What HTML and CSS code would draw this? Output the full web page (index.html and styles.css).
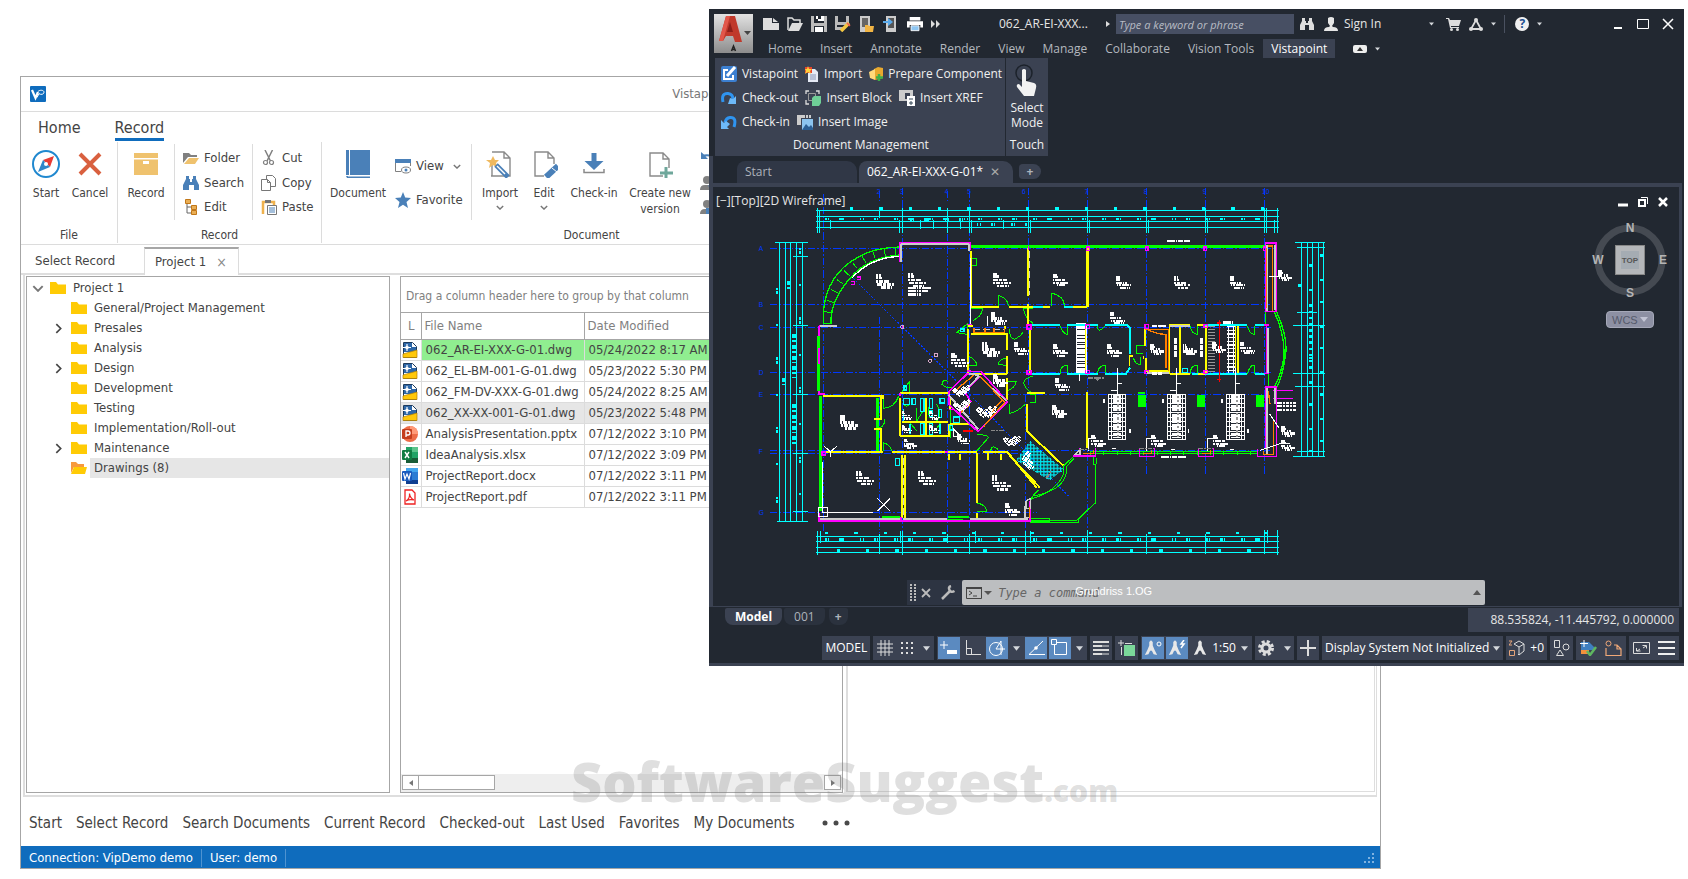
FILE: index.html
```
<!DOCTYPE html>
<html lang="en">
<head>
<meta charset="utf-8">
<title>Vistapoint</title>
<link rel="stylesheet" href="styles.css">
</head>
<body>
<svg class="defs" aria-hidden="true">
  <defs>
    <symbol id="folder" viewBox="0 0 16 12"><path fill="#ffcb05" d="M0 0h6l2 2.500h8V12H0z"/></symbol>
    <symbol id="chev" viewBox="0 0 10 6"><path d="M1 1l4 4 4-4" fill="none" stroke="#777" stroke-width="1.700"/></symbol>
    <symbol id="exp" viewBox="0 0 10 10"><path d="M3 1l4 4-4 4" fill="none" stroke="#444" stroke-width="1.500"/></symbol>
    <symbol id="tri" viewBox="0 0 8 5"><path d="M0 0h8L4 5z" fill="#d5d8dc"/></symbol>
    <symbol id="dwg" viewBox="0 0 16 16"><path fill="#fff" stroke="#1d3a5c" d="M1.500.5h9l4 4v11h-13z"/><path fill="#2f68a8" d="M2 1h8v4h4v5H2z"/><path fill="#ffc80a" d="M1 15.500V12L15 8v7.500z" stroke="#b78300" stroke-width=".7"/><path d="M5 2v7M1 5.500h8" stroke="#fff" stroke-width="1.200"/><circle cx="5" cy="5.500" r="1.800" fill="#fff"/></symbol>
    <symbol id="A" viewBox="0 0 16 18"><path fill="#e8e8e8" d="M8 0l2 2v4l2 5 3 6-4-1-2-4H7l-2 4-4 1 3-6 2-5V2z"/></symbol>
    <symbol id="lb" viewBox="0 0 70 46" overflow="visible"><path d="M0 3h14M0 11h18" stroke-dasharray="7 1" stroke-width="8"/><path d="M0 21h42M2 30h52M14 39h34" stroke-dasharray="6 2 9 1 3 2" stroke-width="8"/></symbol>
    <symbol id="rack" viewBox="0 0 54 140" overflow="visible"><path fill="none" d="M1 1h52v136H1zM10 1v136M44 1v136M1 14h52M1 28h52M1 42h52M1 56h52M1 70h52M1 84h52M1 98h52M1 112h52M1 126h52"/><path d="M27 4v130" stroke-width="26" stroke-dasharray="9 3 5 2"/><path d="M31 6v128" stroke-width="6" stroke="#999" stroke-dasharray="7 6"/></symbol>
    <pattern id="hatch" width="10" height="10" patternUnits="userSpaceOnUse"><path d="M0 0h10M0 0v10" stroke="#00e5ee" stroke-width="7"/></pattern>
  </defs>
</svg>

<main class="desktop">
<section class="vp" aria-label="Vistapoint">
  <header class="vp-title">
    <svg width="16" height="16" viewBox="0 0 16 16"><rect width="16" height="16" rx="1" fill="#0f6cbd"/><path d="M2 4l3.500 8L8 6" fill="none" stroke="#fff" stroke-width="2.200"/><path d="M8 5.500c2-2 6-1.500 6 .7s-3 2.800-5 1.500L7 11.500" fill="none" stroke="#fff"/></svg>
    <h1>Vistapoint</h1>
  </header>
  <nav class="vp-tabs"><button>Home</button><button class="on">Record</button></nav>
  <div class="ribbon">
    <div class="rg file">
      <div class="rb">
        <button class="big w44"><svg width="28" height="28" viewBox="0 0 28 28"><circle cx="14" cy="14" r="13" fill="#fff" stroke="#2088cf" stroke-width="2"/><path fill="#e83c34" d="M22 6l-4 11-7-7z"/><path fill="#2f86c9" d="M6 22l5-12 7 7z"/><circle cx="14" cy="14" r="2" fill="#fff"/></svg><span>Start</span></button>
        <button class="big w44"><svg width="28" height="28" viewBox="0 0 28 28"><path d="M4 4l20 20M24 4L4 24" stroke="#d9603f" stroke-width="4"/></svg><span>Cancel</span></button>
      </div>
      <p>File</p>
    </div>
    <div class="rg record">
      <div class="rb">
        <button class="big w56"><svg width="28" height="28" viewBox="0 0 28 28"><path fill="#efc26e" d="M2 3h24v5H2zM2 9.500h24V25H2z"/><path fill="#fff" d="M11 11h6v3h-6z"/></svg><span>Record</span></button>
        <div class="small w78">
          <button><svg width="16" height="16" viewBox="0 0 16 16"><path fill="#808080" d="M0 3h6l2 2h6v2H5L0 13z"/><path fill="#efc26e" d="M1 14l5-6h10l-4 6z"/></svg>Folder</button>
          <button><svg width="16" height="16" viewBox="0 0 16 16"><path fill="#4a80b8" d="M3 1h3v3h1v3h2V4h1V1h3v3l3 6v5h-5v-5H6v5H0v-5l3-6z"/></svg>Search</button>
          <button><svg width="16" height="16" viewBox="0 0 16 16"><path d="M4 5v9h4M4 8h4" fill="none" stroke="#666"/><path fill="#e9ae55" stroke="#c17718" d="M2.500.5h5v4h-5zM8.500 6.500h5v4h-5zM8.500 11.500h5v4h-5z"/></svg>Edit</button>
        </div>
        <div class="small">
          <button><svg width="16" height="16" viewBox="0 0 16 16"><path d="M4 0l5.500 11M11.500 0L6 11" stroke="#808080" stroke-width="1.500"/><circle cx="4.500" cy="12.500" r="2" fill="none" stroke="#808080" stroke-width="1.200"/><circle cx="10.500" cy="12.500" r="2" fill="none" stroke="#808080" stroke-width="1.200"/></svg>Cut</button>
          <button><svg width="16" height="16" viewBox="0 0 16 16"><path fill="#fff" stroke="#777" d="M5.500.5h6l3 3v8h-9z"/><path fill="#fff" stroke="#777" d="M.5 4.500h6l3 3v8h-9zM6.500 4.500v3h3"/></svg>Copy</button>
          <button><svg width="16" height="16" viewBox="0 0 16 16"><path d="M2 15V3h11v3" fill="none" stroke="#efb24e" stroke-width="2.500"/><path fill="#777" d="M4 1h6v3H4z"/><path fill="#fff" stroke="#777" d="M6.500 6.500h9v9h-9z"/><path d="M8 9h6M8 11h6M8 13h6" stroke="#4a80b8"/></svg>Paste</button>
        </div>
      </div>
      <p>Record</p>
    </div>
    <div class="rg doc">
      <div class="rb">
        <button class="big w72"><svg width="28" height="28" viewBox="0 0 28 28"><path fill="#4a80b8" d="M2 0h3v25H2zM6 0h20v25H6zM2 26h24v2H3z"/><path fill="#fff" d="M4 25.500h22v1H4z"/></svg><span>Document</span></button>
        <div class="small two">
          <button><svg width="16" height="16" viewBox="0 0 16 16"><path fill="#4a80b8" d="M0 1h16v4H0z"/><path d="M.5 5v8.500H6M15.500 5v3" stroke="#808080" fill="none"/><ellipse cx="11" cy="12" rx="4.500" ry="3" fill="#fff" stroke="#808080"/><circle cx="11" cy="12" r="1.500" fill="#4a80b8"/></svg>View<svg class="ch" width="8" height="5"><use href="#chev"/></svg></button>
          <button><svg width="16" height="16" viewBox="0 0 16 16"><path fill="#4a80b8" d="M8 0l2.200 5.500L16 6l-4.500 4 1.500 6-5-3.300L3 16l1.500-6L0 6l5.800-.5z"/></svg>Favorite</button>
        </div>
        <button class="big w44"><svg width="28" height="28" viewBox="0 0 28 28"><path d="M6 2h12l6 6v18H5M18 2v6h6M6 14v12" fill="none" stroke="#8a8a8a" stroke-width="1.400"/><path fill="#efb95f" d="M7 6l2 4 4 0-3 3 2 5-5-3-4 3 1-5-4-3 5 0z"/><path d="M10 15l12 12" stroke="#4a80b8" stroke-width="5"/><path d="M11 16l8 8" stroke="#fff" stroke-width="1.500"/></svg><span>Import</span><svg class="ch" width="8" height="5"><use href="#chev"/></svg></button>
        <button class="big w44"><svg width="28" height="28" viewBox="0 0 28 28"><path d="M14 26H5V2h13l6 6v6M18 2v6h6" fill="none" stroke="#8a8a8a" stroke-width="1.400"/><path d="M16 27l12-11" stroke="#4a80b8" stroke-width="6"/><path d="M22 18l5 4" stroke="#fff"/></svg><span>Edit</span><svg class="ch" width="8" height="5"><use href="#chev"/></svg></button>
        <button class="big w56"><svg width="28" height="28" viewBox="0 0 28 28"><path fill="#4a80b8" d="M11.500 3h5v8h7L14 20l-9.500-9h7z"/><path d="M4 19v3.500h20V19" fill="none" stroke="#8a8a8a" stroke-width="1.500"/></svg><span>Check-in</span></button>
        <button class="big w76"><svg width="28" height="28" viewBox="0 0 28 28"><path d="M17 26H4V3h13l6 6v9M17 3v6h6" fill="none" stroke="#8a8a8a" stroke-width="1.400"/><path d="M20 17v12M14 23h13" stroke="#6fa79b" stroke-width="3"/></svg><span>Create new<br>version</span></button>
        <div class="small">
          <button aria-label="Undo"><svg width="16" height="16" viewBox="0 0 16 16"><path fill="#4a80b8" d="M1 2v7h7L5.500 6.500Q10 5 13 10 13 3 4 4.500z"/></svg></button>
          <button aria-label="Assign user"><svg width="16" height="16" viewBox="0 0 16 16"><circle cx="7" cy="5" r="4" fill="#808080"/><path fill="#808080" d="M0 15q0-5 5-5h4q4 0 4 5z"/><path fill="#4a80b8" d="M8 11l4-3v6z"/></svg></button>
          <button aria-label="Save user"><svg width="16" height="16" viewBox="0 0 16 16"><circle cx="7" cy="5" r="4" fill="#808080"/><path fill="#808080" d="M0 15q0-5 5-5h4q4 0 4 5z"/><path fill="#4a80b8" d="M6 9h9v6H6z"/></svg></button>
        </div>
      </div>
      <p>Document</p>
    </div>
  </div>
  <div class="doctabs"><button>Select Record</button><button class="on">Project 1 <span>×</span></button></div>
  <div class="work">
    <div class="tree panel">
      <ul>
        <li class="root"><button aria-label="Collapse"><svg width="12" height="7"><use href="#chev"/></svg></button><svg width="16" height="12"><use href="#folder"/></svg><span>Project 1</span></li>
        <li><i></i><svg width="16" height="12"><use href="#folder"/></svg><span>General/Project Management</span></li>
        <li><button aria-label="Expand"><svg width="11" height="11"><use href="#exp"/></svg></button><svg width="16" height="12"><use href="#folder"/></svg><span>Presales</span></li>
        <li><i></i><svg width="16" height="12"><use href="#folder"/></svg><span>Analysis</span></li>
        <li><button aria-label="Expand"><svg width="11" height="11"><use href="#exp"/></svg></button><svg width="16" height="12"><use href="#folder"/></svg><span>Design</span></li>
        <li><i></i><svg width="16" height="12"><use href="#folder"/></svg><span>Development</span></li>
        <li><i></i><svg width="16" height="12"><use href="#folder"/></svg><span>Testing</span></li>
        <li><i></i><svg width="16" height="12"><use href="#folder"/></svg><span>Implementation/Roll-out</span></li>
        <li><button aria-label="Expand"><svg width="11" height="11"><use href="#exp"/></svg></button><svg width="16" height="12"><use href="#folder"/></svg><span>Maintenance</span></li>
        <li class="sel"><i></i><svg width="16" height="12" viewBox="0 0 16 12"><path fill="#f79a3e" d="M0 0h5l2 2h6v3H3L0 11z"/><path fill="#ffcb05" d="M0 12l3-7h13l-2 7z"/></svg><span>Drawings (8)</span></li>
      </ul>
    </div>
    <div class="grid panel">
      <p class="hint">Drag a column header here to group by that column</p>
      <table>
        <thead><tr><th class="c1">L</th><th class="c2">File Name</th><th>Date Modified</th></tr></thead>
        <tbody>
          <tr class="green"><td class="ic"><svg width="16" height="16"><use href="#dwg"/></svg></td><td>062_AR-EI-XXX-G-01.dwg</td><td>05/24/2022 8:17 AM</td></tr>
          <tr><td class="ic"><svg width="16" height="16"><use href="#dwg"/></svg></td><td>062_EL-BM-001-G-01.dwg</td><td>05/23/2022 5:30 PM</td></tr>
          <tr><td class="ic"><svg width="16" height="16"><use href="#dwg"/></svg></td><td>062_FM-DV-XXX-G-01.dwg</td><td>05/24/2022 8:25 AM</td></tr>
          <tr class="grey"><td class="ic"><svg width="16" height="16"><use href="#dwg"/></svg></td><td>062_XX-XX-001-G-01.dwg</td><td>05/23/2022 5:48 PM</td></tr>
          <tr><td class="ic"><svg width="16" height="16" viewBox="0 0 16 16"><circle cx="8" cy="8" r="8" fill="#ed6c47"/><path fill="#ff9a78" d="M8 0a8 8 0 018 8H8z"/><rect y="3" width="10" height="10" rx="1" fill="#c43e1c"/><path d="M4 11V5h2q2 0 2 2T6 9H4" fill="none" stroke="#fff" stroke-width="1.300"/></svg></td><td>AnalysisPresentation.pptx</td><td>07/12/2022 3:10 PM</td></tr>
          <tr><td class="ic"><svg width="16" height="16" viewBox="0 0 16 16"><path fill="#21a366" d="M4 0h12v16H4z"/><path fill="#5bc48b" d="M10 0h6v5h-6z"/><path fill="#185c37" d="M4 11h12v5H4z"/><rect y="3" width="10" height="10" rx="1" fill="#107c41"/><path d="M3 5l4 6M7 5l-4 6" stroke="#fff" stroke-width="1.400"/></svg></td><td>IdeaAnalysis.xlsx</td><td>07/12/2022 3:09 PM</td></tr>
          <tr><td class="ic"><svg width="16" height="16" viewBox="0 0 16 16"><path fill="#2b7cd3" d="M4 0h12v16H4z"/><path fill="#41a5ee" d="M4 0h12v4H4z"/><path fill="#103f91" d="M4 12h12v4H4z"/><rect y="3" width="10" height="10" rx="1" fill="#185abd"/><path d="M1.500 5l1.500 6 2-5 2 5 1.500-6" fill="none" stroke="#fff" stroke-width="1.200"/></svg></td><td>ProjectReport.docx</td><td>07/12/2022 3:11 PM</td></tr>
          <tr><td class="ic"><svg width="16" height="16" viewBox="0 0 16 16"><path fill="#fff" stroke="#e22" stroke-width="1.300" d="M3 1h7l3 3v11H3z"/><path d="M4 12q4-2 3.500-7.500Q8 9 12 11q-5-1-8 1z" fill="none" stroke="#e22" stroke-width="1.200"/></svg></td><td>ProjectReport.pdf</td><td>07/12/2022 3:11 PM</td></tr>
        </tbody>
      </table>
      <div class="hscroll"><button aria-label="Scroll left"><svg width="4" height="6"><path d="M4 0v6L0 3z" fill="#777"/></svg></button><span></span><button class="r" aria-label="Scroll right"><svg width="4" height="6"><path d="M0 0v6l4-3z" fill="#777"/></svg></button></div>
    </div>
    <div class="detail"></div>
  </div>
  <nav class="bottom"><a href="#">Start</a><a href="#">Select Record</a><a href="#">Search Documents</a><a href="#">Current Record</a><a href="#">Checked-out</a><a href="#">Last Used</a><a href="#">Favorites</a><a href="#">My Documents</a><button aria-label="More"><svg width="28" height="6" viewBox="0 0 28 6"><g fill="#4a4a4a"><circle cx="3" cy="3" r="2.500"/><circle cx="14" cy="3" r="2.500"/><circle cx="25" cy="3" r="2.500"/></g></svg></button></nav>
  <footer class="vp-status"><span>Connection: VipDemo demo</span><span>User: demo</span><svg width="12" height="12" viewBox="0 0 12 12"><path d="M9 1v2M9 5v2M9 9v2M5 5v2M5 9v2M1 9v2" stroke="#7fb2e0" stroke-width="2"/></svg></footer>
</section>
<div class="mark">SoftwareSuggest<small>.com</small></div>

<section class="cad" aria-label="AutoCAD">
  <header class="cad-head">
    <button class="app" aria-label="Application menu"><svg width="39" height="39" viewBox="0 0 39 39"><path fill="#c0392b" d="M12 2h9l7 26h-7l-2-6h-7l-3 5H5z"/><path fill="#8e1f1a" d="M16 8l3 10h-6z"/><path fill="#e2574a" d="M12 2h4L9 27H5z"/><path fill="#444" d="M30 17h7l-3.500 4z"/><path d="M17.500 37l2-5 2 5M18 35.500h3" fill="none" stroke="#222" stroke-width="1.500"/></svg></button>
    <div class="cad-bars">
      <div class="cad-title">
        <div class="qat">
          <button aria-label="New"><svg width="16" height="16" viewBox="0 0 16 16"><path fill="#ddd" d="M0 2h9v5h7v7H0z"/><path fill="#ddd" d="M10 2l5 4h-5z"/></svg></button>
          <button aria-label="Open"><svg width="16" height="16" viewBox="0 0 16 16"><path d="M1 14V2h4l2 2h6v3" fill="none" stroke="#ddd" stroke-width="1.500"/><path fill="#ddd" d="M1 15l4-8h11l-4 8z"/></svg></button>
          <button aria-label="Save"><svg width="16" height="16" viewBox="0 0 16 16"><path fill="#bbb" d="M0 0h16v16H0z"/><path fill="#222831" d="M3 0h10v7H3zM3 10h10v6H3z"/><path fill="#fff" d="M5 0h2v5h6V0h-3v3H5zM4 11h8v5H4z"/></svg></button>
          <button aria-label="Save as"><svg width="16" height="16" viewBox="0 0 16 16"><path fill="#bbb" d="M0 0h14v8L8 14H0z"/><path fill="#222831" d="M3 0h8v6H3zM2 9h8v2H2z"/><path d="M6 15l8-8" stroke="#f5c842" stroke-width="3.500"/><path d="M12 7l3 3" stroke="#e55" stroke-width="1.500"/></svg></button>
          <button aria-label="Open from mobile"><svg width="16" height="16" viewBox="0 0 16 16"><path fill="#ccc" d="M1 0h10v16H1z"/><path fill="#666" d="M3 2h6v9H3z"/><path fill="#f2b544" d="M6 9h3l1 1h5l-1 6H6z"/></svg></button>
          <button aria-label="Save to mobile"><svg width="16" height="16" viewBox="0 0 16 16"><path fill="#ccc" d="M3 0h10v16H3z"/><path fill="#555" d="M5 2h6v10H5z"/><path fill="#5aa9ea" d="M0 5h5V2l5 4-5 4V7H0z"/></svg></button>
          <button aria-label="Plot"><svg width="16" height="16" viewBox="0 0 18 16"><path fill="#fff" d="M3 0h12v4H3zM0 5h18v7h-3V9H3v3H0z"/><path fill="#8ec6f2" stroke="#fff" d="M4.500 10h9v5.500h-9z"/></svg></button>
          <button aria-label="More"><svg width="10" height="8" viewBox="0 0 10 8"><path fill="#ddd" d="M0 0l4 4-4 4zM5 0l4 4-4 4z"/></svg></button>
        </div>
        <span class="fname">062_AR-EI-XXX...</span>
        <svg class="arr" width="4" height="6"><path d="M0 0l4 3-4 3z" fill="#ddd"/></svg>
        <input type="text" aria-label="Search help" placeholder="Type a keyword or phrase">
        <div class="user">
          <button aria-label="Find"><svg width="14" height="14" viewBox="0 0 14 14"><path fill="#ddd" d="M2 1h3v3h1v2h2V4h1V1h3v3l2 4v5H9V8H5v5H0V8l2-4z"/></svg></button>
          <button class="sign"><svg width="14" height="14" viewBox="0 0 14 14"><path fill="#e6e6e6" d="M4 1q3-2 6 0v5L8 9l1 1q5 0 5 4H0q0-4 5-4l1-1-2-3z"/></svg>Sign In</button>
          <button aria-label="Account menu"><svg width="5" height="4"><use href="#tri"/></svg></button>
          <button aria-label="Store"><svg width="15" height="14" viewBox="0 0 15 14"><path fill="#ddd" d="M0 1h3l1 2h11l-2 6H5l0 1h8v1H4L2 2H0z"/><circle cx="5.500" cy="12.500" r="1.500" fill="#ddd"/><circle cx="11.500" cy="12.500" r="1.500" fill="#ddd"/></svg></button>
          <button class="share"><svg width="14" height="13" viewBox="0 0 14 13"><path d="M7 2l5 9H2z" fill="none" stroke="#ddd" stroke-width="1.800"/><g fill="#ddd"><circle cx="7" cy="2" r="2"/><circle cx="2" cy="11" r="2"/><circle cx="12" cy="11" r="2"/></g></svg><svg width="5" height="4"><use href="#tri"/></svg></button>
          <button class="help"><b>?</b><svg width="5" height="4"><use href="#tri"/></svg></button>
        </div>
        <div class="wbtn">
          <button aria-label="Minimize"><svg width="12" height="12"><path d="M2 10h8" stroke="#fff" stroke-width="2"/></svg></button>
          <button aria-label="Maximize"><svg width="12" height="12"><path d="M.5 1.500h11v9H.5z" fill="none" stroke="#fff"/></svg></button>
          <button aria-label="Close"><svg width="12" height="12"><path d="M1 1l10 10M11 1L1 11" stroke="#fff" stroke-width="1.500"/></svg></button>
        </div>
      </div>
      <nav class="cad-tabs"><button>Home</button><button>Insert</button><button>Annotate</button><button>Render</button><button>View</button><button>Manage</button><button>Collaborate</button><button>Vision Tools</button><button class="on">Vistapoint</button><button class="mini" aria-label="Minimize ribbon"><svg width="14" height="8" viewBox="0 0 14 8"><rect width="14" height="8" rx="2" fill="#eee"/><path d="M4 6l3-4 3 4z" fill="#333"/></svg><svg width="5" height="4"><use href="#tri"/></svg></button></nav>
    </div>
  </header>
  <div class="cad-ribbon">
    <div class="panelc">
      <div class="row">
        <button><svg width="16" height="16" viewBox="0 0 16 16"><rect width="16" height="16" rx="2" fill="#3c7fd0"/><path d="M12 9v4H3V4h4" fill="none" stroke="#fff" stroke-width="2"/><path d="M6 10l8-9" stroke="#fff" stroke-width="3"/></svg>Vistapoint</button>
        <button><svg width="14" height="16" viewBox="0 0 14 16"><path fill="#e6eaf5" d="M3 3h7l3 3v10H3z"/><path d="M5 9h6M5 11h6M5 13h6" stroke="#8a96b8"/><path fill="#e8452c" d="M0 1h7v6H0z"/><path fill="#ffd23c" d="M3 0l1 3h3L5 5l1 3-3-2-3 2 1-3-1-2h2z"/></svg>Import</button>
        <button><svg width="14" height="14" viewBox="0 0 14 14"><path fill="#e9a92e" d="M5 2l4-2 5 1v10l-8 2z"/><path fill="#ffd97a" d="M0 5l6-3v11l-5-2z"/><path d="M10 7v7M7 10.500h7" stroke="#3fae49" stroke-width="2.500"/></svg>Prepare Component</button>
      </div>
      <div class="row">
        <button><svg width="16" height="16" viewBox="0 0 16 16"><path fill="none" stroke="#2f94f0" stroke-width="3" d="M2 12Q0 3 7 3.500q5 .5 5 6"/><path fill="#6db9f8" d="M7 14h8V6l-3 3-3-1-1 3z"/></svg>Check-out</button>
        <button><svg width="16" height="16" viewBox="0 0 16 16"><path d="M1 4V1h3M11 1h3v3M1 10v4h3" fill="none" stroke="#ddd" stroke-width="1.300"/><path d="M3.500 3.500h7v7h-7z" fill="none" stroke="#999"/><path fill="#6fcf97" d="M7 8l2-2h7v7l-2 3H7z"/></svg>Insert Block</button>
        <button><svg width="16" height="16" viewBox="0 0 16 16"><path fill="#ccc" d="M0 0h14v6H9v5H0z"/><path fill="#3b4252" d="M6 3h5v3H8v3H6z"/><path fill="#fff" d="M8 6h8v10H8z"/><path d="M10 9h4M12 11v4M10 13h4" stroke="#345"/></svg>Insert XREF</button>
      </div>
      <div class="row">
        <button><svg width="16" height="16" viewBox="0 0 16 16"><path fill="none" stroke="#2f94f0" stroke-width="3" d="M13 13Q16 3 9 3.500q-4 .5-5 5"/><path fill="#6db9f8" d="M0 6v9h8l-2-2 3-3-4-3-2 2z"/></svg>Check-in</button>
        <button><svg width="16" height="16" viewBox="0 0 16 16"><path fill="#ccc" d="M0 1h8v3H4v7H0zM9 1h2v3H9zM12 1h2v3h-2z"/><path fill="#8cc4ef" d="M5 5h11v11H5z"/><path fill="#2c5f94" d="M5 16l4-6 3 3 2-2 2 3v2z"/></svg>Insert Image</button>
      </div>
      <p>Document Management</p>
    </div>
    <div class="panelc touch">
      <button><svg width="24" height="34" viewBox="0 0 24 34"><circle cx="9" cy="9" r="8" fill="none" stroke="#1c222b" stroke-width="1.500"/><path fill="#f2f2f2" d="M7 6q2-2 4 0v11l8 2q3 1 2 5l-2 8H9l-7-9q-1-3 2-3l3 3z"/></svg><span>Select<br>Mode</span></button>
      <p>Touch</p>
    </div>
  </div>
  <div class="cad-docs"><button class="t1">Start</button><button class="t2 on">062_AR-EI-XXX-G-01* <span>✕</span></button><button class="plus" aria-label="New tab">+</button></div>

  <div class="canvas">
    <svg class="plan" viewBox="-171 -12 2898 1257" shape-rendering="crispEdges" fill="none" stroke-width="3" role="img" aria-label="Floor plan">
      <g stroke="#0038ff" stroke-dasharray="22 6 4 6">
        <path d="M160 10V1025M328 378V1025M328 0V30M397 -10V1025M532 0V30M532 90V1025M598 0V1025M775 -10V590M767 610V1025M952 -10V1025M1129 -10V850M1306 -10V850M1483 -10V850"/>
        <path d="M0 172H1520M0 340H1500M0 408H1510M0 544H1510M0 610H1480M0 778H1500M0 787H780M0 964H800"/>
        <path d="M250 262L560 570L900 920" stroke-dasharray="6 5"/>
      </g>
      <g fill="#0038ff" class="axes">
        <text x="-34" y="180">A</text><text x="-34" y="348">B</text><text x="-34" y="416">C</text><text x="-34" y="552">D</text><text x="-34" y="618">E</text><text x="-34" y="790">F</text><text x="-34" y="972">G</text>
        <text x="320" y="8">2</text><text x="390" y="8">3</text><text x="524" y="8">4</text><text x="592" y="8">5</text><text x="756" y="8">6</text><text x="944" y="8">7</text><text x="1121" y="8">8</text><text x="1298" y="8">9</text><text x="1476" y="8">10</text>
      </g>
      <g stroke="#00ffff">
        <path d="M138 58H1527M138 75H1527M138 91H1527M138 109H1527M138 1036H1527M138 1051H1527M138 1068H1527M138 1084H1527"/>
        <path d="M28 153V990M45 153V990M62 153V990M80 153V990M97 153V990M15 153H114M20 990H114M70 195H114M70 404H114M70 610H114M70 787H114M70 960H114"/>
        <path d="M1593 153V797M1611 153V797M1627 153V797M1645 153V797M1661 153V797M1575 155H1665M1580 170H1665M1580 363H1640M1568 402H1665M1568 548H1665M1575 587H1665M1568 797H1665M1580 780H1665"/>
        <path d="M142 50V125M148 58V125M181 86V114M328 50V80M388 86V125M397 50V125M450 86V114M490 86V114M532 50V125M570 86V114M598 50V125M604 86V125M700 86V114M775 50V125M780 86V125M952 50V125M958 86V125M1129 50V125M1135 86V125M1306 50V125M1312 86V125M1483 50V125M1490 50V125M1513 86V125M1521 50V125"/>
        <path d="M142 1020V1092M150 1020V1056M328 1030V1090M390 1020V1056M397 1020V1092M532 1030V1056M598 1030V1090M617 1020V1056M767 1020V1092M780 1020V1056M952 1018V1090M1129 1030V1090M1306 1030V1090M1483 1018V1090M1493 1018V1056M1521 1018V1092"/>
        <path d="M165 84H1500M620 100H770M420 85H600M165 1045H1510" stroke-width="8" stroke-dasharray="5 4 3 30 8 2 4 48"/>
        <path d="M240 52H1500M165 1026H1510M200 1078H1510" stroke-width="8" stroke-dasharray="10 78"/>
        <path d="M22 290V980M90 170V980" stroke-width="6" stroke-dasharray="7 3 9 90 6 94"/>
        <path d="M72 430V560M72 640V760M56 270V300M42 560V590" stroke-width="12" stroke-dasharray="12 6 5 9"/>
        <path d="M1588 280V300M1622 220V780M1655 190V790" stroke-width="8" stroke-dasharray="7 66 8 58"/>
        <path d="M1620 340V560" stroke-width="9" stroke-dasharray="8 12 5 12"/>
      </g>
      <g stroke="#00ff00">
        <path d="M160 398V362Q170 250 262 200Q310 170 388 168M183 398Q180 330 240 262Q290 200 388 192" stroke-width="4"/>
        <path d="M171 398Q172 300 245 232Q300 180 388 180" stroke-width="22" stroke-dasharray="3 30"/>
        <path d="M598 166H1485M424 156H466M508 156H590" stroke-width="9"/>
        <path d="M146 436V600M152 614V960M323 620V780" stroke-width="8"/>
        <path d="M335 978H390M535 978H598M425 988H580M620 988H770" stroke-width="8"/>
        <path d="M605 202h14v20h-14M686 348V314Q712 320 716 345M604 352h34Q636 376 610 388M790 352H760Q764 380 790 398M718 415Q720 448 736 444Q752 436 760 422M598 496Q622 510 620 524H598M712 500Q684 505 686 520L712 524M712 572H738Q736 590 712 600M718 640V668Q745 660 766 640M790 555Q758 562 762 580Q770 600 790 606M560 425L592 398V430zM395 604L418 572V604zM340 620V652Q372 652 386 616M340 780V755Q360 760 365 780M316 714Q345 712 344 684M535 572Q520 560 516 580Q530 594 550 590M620 962H650Q648 940 620 936M620 780L655 740Q655 730 620 732M780 610h16v25h-16M662 780Q664 758 684 775"/>
        <path d="M844 345V307Q880 312 884 345M870 405Q880 430 892 430V405M870 548Q872 522 892 522V548M982 405Q985 430 1005 405M982 548Q985 522 1005 524V548M1260 405Q1265 430 1283 430V405M1260 548Q1262 522 1283 522V548M1432 405Q1440 430 1452 430V405M1432 548Q1440 522 1452 522V548M1124 464H1098V488H1120M1112 497V522Q1095 520 1090 500"/>
        <path d="M1495 548V590M1486 363V400M1513 363Q1545 430 1542 500Q1530 560 1512 590M1520 363Q1550 430 1548 480Q1540 550 1520 590" stroke-width="4"/>
        <path d="M960 781H1460M960 787H1460"/><path d="M960 785H1460" stroke-width="13" stroke-dasharray="3 37"/>
        <path d="M970 795V820H977V935L925 985V994H780V988H920L976 935M980 800V820M782 925Q860 900 880 850V825L912 795M790 915Q875 900 888 850V828L912 802M805 897Q790 910 782 925M782 983h55v8h-55"/>
        <path d="M1104 605h22M1104 645h22" stroke-width="6"/>
        <path fill="#00ff00" stroke="none" d="M1104 612h24v35h-24zM1281 612h24v35h-24zM1458 612h24v35h-24z"/>
        <path d="M400 640Q408 650 418 642M480 640Q470 660 480 680M440 650V690L462 655M500 640Q520 670 500 690M540 640V740M420 695L440 720M495 720L515 690"/>
      </g>
      <g stroke="#ffff00" stroke-width="6">
        <path d="M602 180V348H688M716 348H820M775 172V314M775 340V402M594 404H610M704 404V414M602 429H712V476M594 414V548M712 495V548M712 560V628M594 548H712M780 410V548"/>
        <path d="M160 614H340V625M333 614V684H312M312 714H333V782M160 783H340M365 783H620M620 786V935M620 965V985M390 606H540M390 620V735M390 735H540M467 620V738M540 618V655M395 692H535M537 790V808M570 790V808M654 783V808M692 790V808M640 783H712L800 890M397 793V980M404 793V980M540 700H600M537 698V735M770 640V720L880 824M720 795L810 890"/>
        <path d="M820 348H840M908 348H950M950 172V348M955 172V348M948 402V548M950 604V770M1125 405V465M1128 500V540H1200M1198 402V548M1230 402V548M1198 402H1260M1282 402H1308V548M1200 548H1260M1284 548H1306M1396 402V548M1403 402V548M1078 494V525M1078 494H1090M1120 494V505M770 606H825" stroke-width="5"/>
        <path d="M777 180V312M608 414H704M400 800V980" stroke="#ccc" stroke-width="3" stroke-dasharray="22 8"/>
      </g>
      <g stroke="#00ffff" stroke-width="6">
        <path d="M780 402H870M892 402H985M1005 402H1070L1080 412V490M1080 530L1068 548H1005M985 548H892M870 548H780M908 348H882M820 348H790M1306 402H1432M1455 402H1485M1306 548H1432M1455 548H1485M1266 548H1284"/>
        <g stroke-width="4"><path d="M400 622h18v18h-18zM426 622h10v18h-10zM452 622h10v40h-10zM478 622h10v30h-10zM510 622h14v14h-14zM478 658h10v18h-10zM452 698h10v32h-10zM478 698h10v32h-10zM505 655h10v25h-10zM550 678h18v16h-18zM400 655V690M420 700V730M510 700V730M402 585h8v12h-8zM572 414h10v8h-10zM376 802v22h12v-22zM538 703h10v14h-10zM1238 532h14v12h-14z"/></g>
      </g>
      <path d="M780 750L882 836L838 868L738 808z" fill="url(#hatch)"/>
      <g stroke="#ff00ff" stroke-width="5">
        <path d="M388 212V156H600V176M146 404H202M146 404V436M146 600V608H166M146 470V520M146 965V989H392V978M396 989H780V930M390 606V614M592 541H632L712 632L624 722L536 640V602L592 548L602 548M632 555L584 602L602 632L568 668M538 655H548M398 402v12M592 400h14M775 166v10M770 402h12v12h-12zM770 538h12v10h-12zM156 783h10v8h-10zM525 783h10M590 538h14"/>
        <path d="M1486 156H1518V362H1486zM1486 172V300M1490 405V548M1482 402h14M1482 548h14M1486 588H1520V796H1462V775M1486 588V770M910 795H976V772M930 772V785M1108 772V796H1154V772M1285 772V796H1330V772M948 400h10v12h-10zM948 538h10v10h-10zM1125 400h10v12h-10zM1125 538h10v10h-10zM1302 400h10v10h-10zM1302 538h10v10h-10zM950 168h8v10h-8zM1126 168h8v10h-8zM1302 168h8v10h-8zM1480 168h8v10h-8z" stroke-width="4"/>
        <path d="M1510 598h60M1510 622h60" stroke-width="3"/>
        <path d="M244 272h10v8h-10M262 258h10v8h-10" stroke-width="4"/>
      </g>
      <g stroke="#ccc" stroke-width="6">
        <path d="M392 160H598M392 160V212M598 160V180M150 404H200M150 985H390M398 985H530M600 985H775M596 548L628 552M628 555L582 602M600 632L566 662M536 612L625 715M1490 162V360M1514 162V358M1490 592V790M1514 592V640M1494 410V545M1130 545H1196M1200 404H1260"/>
        <path d="M768 930l14-8v30h-14zM765 945v35h12M915 790l15-14v14zM640 568L710 630" stroke-width="4"/>
      </g>
      <g stroke="#ff7f00" stroke-width="4">
        <path d="M612 412V424H704V412M645 412v10M672 412v10M612 552L548 605M632 558L704 634L660 684L640 708M600 640L574 664M778 948V980M1508 165V360M1494 165H1508M1490 170V350M1130 415Q1160 430 1188 430V530M1126 415H1195V540M1500 640L1495 600M1510 690V790H1480V780M940 788h30v-10M1118 788h26v-10M1295 788h26v-10M695 628L665 662"/>
      </g>
      <g stroke="#ff0000"><path d="M1348 388V572M1342 396h12M1342 565h12" stroke-width="4"/><path d="M580 720H610" stroke-width="5"/></g>
      <g stroke="#fff">
        <path d="M245 262Q300 200 388 196" stroke-width="4"/><path d="M602 200V400" stroke-width="3"/>
        <path d="M158 812V964H308M146 950h26v26h-26zM322 922l38 38M360 922l-38 38M163 766l18 16 20-16M181 782v16"/>
        <path d="M1042 532V610M1219 532V610M1396 532V610M1042 577h14M1219 577h14M1396 577h14M928 548V570M955 780V742h22M1129 780V742h22M1312 780V742h22M1498 256h28M1498 668l30 44M1470 778l60-20h30M653 405V375M548 712l18 18M550 710v25h20"/>
        <path d="M1001 624v12M1178 624v12M1355 624v12M1080 715v12M1255 715v12M1434 715v12" stroke-width="5"/>
        <use href="#rack" x="1014" y="608" width="54" height="140"/><use href="#rack" x="1192" y="608" width="54" height="140"/><use href="#rack" x="1369" y="608" width="54" height="140"/>
        <path d="M932 405V545" stroke-width="26" stroke-dasharray="9 3 5 2"/><path d="M918 405V545M948 405V545"/>
        <path d="M1325 405V545" stroke-width="22" stroke="#999" stroke-dasharray="3 6"/><path d="M1382 405V545" stroke-width="24" stroke-dasharray="4 7"/><path d="M1376 405V545M1390 405V545"/>
        <use href="#lb" x="318" y="250" width="70" height="46"/><use href="#lb" x="414" y="246" width="70" height="46"/><path d="M414 290h70M414 300h60M414 310h40" stroke-width="7" stroke-dasharray="8 2 5 1"/>
        <use href="#lb" x="668" y="246" width="70" height="46"/><use href="#lb" x="542" y="486" width="70" height="46"/><use href="#lb" x="636" y="455" width="70" height="46"/><use href="#lb" x="732" y="455" width="60" height="40"/><use href="#lb" x="658" y="364" width="70" height="40"/><use href="#lb" x="668" y="550" width="60" height="40"/>
        <use href="#lb" x="207" y="674" width="78" height="46"/><use href="#lb" x="243" y="840" width="100" height="46"/><use href="#lb" x="444" y="840" width="70" height="46"/><use href="#lb" x="666" y="850" width="72" height="56"/><use href="#lb" x="704" y="938" width="60" height="40"/><use href="#lb" x="562" y="728" width="50" height="36"/>
        <use href="#lb" x="395" y="655" width="40" height="40"/><use href="#lb" x="395" y="695" width="40" height="40"/><use href="#lb" x="478" y="655" width="40" height="40"/><use href="#lb" x="478" y="695" width="40" height="40"/><use href="#lb" x="402" y="740" width="50" height="40"/>
        <g transform="rotate(-38 650 650)"><use href="#lb" x="620" y="635" width="70" height="46"/></g><g transform="rotate(-45 575 600)"><use href="#lb" x="556" y="578" width="60" height="40"/></g><g transform="rotate(-45 575 635)"><use href="#lb" x="550" y="620" width="60" height="40"/></g><g transform="rotate(-38 730 745)"><use href="#lb" x="705" y="725" width="60" height="40"/></g><g transform="rotate(42 780 800)"><use href="#lb" x="760" y="790" width="64" height="40"/></g>
        <use href="#lb" x="848" y="246" width="60" height="46"/><use href="#lb" x="1038" y="254" width="60" height="46"/><use href="#lb" x="1213" y="254" width="60" height="46"/><use href="#lb" x="1380" y="254" width="60" height="46"/><use href="#lb" x="1020" y="360" width="60" height="46"/><use href="#lb" x="848" y="458" width="60" height="46"/><use href="#lb" x="1010" y="458" width="60" height="46"/><use href="#lb" x="1140" y="446" width="54" height="60"/><use href="#lb" x="1238" y="446" width="54" height="60"/><use href="#lb" x="1326" y="446" width="54" height="50"/><use href="#lb" x="1410" y="450" width="60" height="46"/><use href="#lb" x="855" y="560" width="60" height="46"/><use href="#lb" x="845" y="640" width="60" height="46"/>
        <use href="#lb" x="962" y="732" width="60" height="40"/><use href="#lb" x="1142" y="732" width="60" height="40"/><use href="#lb" x="1328" y="732" width="60" height="40"/><use href="#lb" x="1524" y="232" width="54" height="46"/><use href="#lb" x="1533" y="702" width="54" height="40"/><use href="#lb" x="1533" y="746" width="54" height="40"/>
        <path d="M1520 636h58M1520 646h60M1520 656h62" stroke-width="6" stroke-dasharray="6 2 9 3"/>
        <path d="M1190 150h70M1172 797h78M1146 405h44M1146 547h30M1358 394h30" stroke-width="7" stroke-dasharray="9 1 5 2"/>
        <path d="M1216 440v60M1294 440v60" stroke-width="8" stroke-dasharray="7 1 4 1"/>
        <path d="M1027 772h12M1204 774h12M1380 774h12M918 396h30M1024 598h20M1200 598h20"/>
      </g>
      <g stroke="#888" stroke-width="5"><path d="M662 718h44M955 560h50M928 775h30M1108 772h44M1285 772h44M985 568l-8-8M830 860l14-20" stroke-dasharray="14 3 6 2"/></g>
      <g stroke="#d8a8c8"><circle cx="481" cy="509" r="5"/><circle cx="498" cy="492" r="5"/><circle cx="397" cy="408" r="5"/></g>
    </svg>
    <span class="vlabel">[−][Top][2D Wireframe]</span>
    <div class="nav3d">
      <svg width="78" height="80" viewBox="0 0 78 80"><circle cx="39" cy="39" r="32" fill="none" stroke="#454a52" stroke-width="7"/><rect x="24.500" y="24.500" width="29" height="29" fill="#b5b7ba" stroke="#888"/><rect x="30" y="30" width="18" height="18" fill="#a5acb3"/><g class="dirs" fill="#b5b5b5" text-anchor="middle"><text x="39" y="11">N</text><text x="39" y="76">S</text><text x="7" y="43">W</text><text x="72" y="43">E</text><text class="top" x="39" y="42">TOP</text></g></svg>
      <button>WCS <svg width="8" height="5" viewBox="0 0 8 5"><path d="M0 0h8L4 5z" fill="#c2c4d4"/></svg></button>
    </div>
    <div class="vbtn"><button aria-label="Minimize view"><svg width="10" height="10"><path d="M0 8h10" stroke="#fff" stroke-width="3"/></svg></button><button aria-label="Restore view"><svg width="10" height="10"><path d="M1 3h6v6H1z" fill="none" stroke="#fff" stroke-width="2"/><path d="M3 .5h6.500V7" fill="none" stroke="#fff"/></svg></button><button aria-label="Close view"><svg width="10" height="10"><path d="M1 1l8 8M9 1L1 9" stroke="#fff" stroke-width="2.500"/></svg></button></div>
    <div class="cmd">
      <svg width="6" height="18" viewBox="0 0 6 18"><path d="M1 0v18M5 0v18" stroke="#bbb" stroke-width="2" stroke-dasharray="2 1"/></svg>
      <button aria-label="Close command line"><svg width="10" height="10"><path d="M1 1l8 8M9 1L1 9" stroke="#bbb" stroke-width="1.800"/></svg></button>
      <button class="wrench" aria-label="Customize"><svg width="15" height="15" viewBox="0 0 15 15"><path d="M1 14l8-8" stroke="#bbb" stroke-width="2.500"/><path d="M10 1q-3 1-1.500 4T13.500 6" fill="none" stroke="#bbb" stroke-width="2.500"/></svg></button>
      <div class="cmdbox">
        <svg width="26" height="12" viewBox="0 0 26 12"><path d="M.5.5h15v11H.5z" fill="none" stroke="#444"/><path d="M0 0h16v2H0z" fill="#444"/><path d="M3 4l3 2-3 2M7 9h4" fill="none" stroke="#444"/><path d="M18 4h8l-4 4z" fill="#555"/></svg>
        <input type="text" aria-label="Command" placeholder="Type a command">
        <span class="floor">Grundriss 1.OG</span>
        <svg width="8" height="5"><path d="M0 5h8L4 0z" fill="#555"/></svg>
      </div>
    </div>
  </div>

  <div class="layouts">
    <div class="lt"><button class="on">Model</button><button>001</button><button class="pl" aria-label="New layout">+</button></div>
    <output>88.535824, -11.445792, 0.000000</output>
  </div>
  <footer class="cad-status">
    <button>MODEL</button>
    <div class="sg"><button aria-label="Grid"><svg width="16" height="16"><path d="M4 0v16M8 0v16M12 0v16M0 4h16M0 8h16M0 12h16" stroke="#ddd"/></svg></button><button aria-label="Snap"><svg width="14" height="14"><path d="M0 2h14M0 7h14M0 12h14" stroke="#ddd" stroke-width="2" stroke-dasharray="2 3"/></svg></button><button aria-label="Snap options"><svg width="7" height="5"><use href="#tri"/></svg></button></div>
    <div class="sg"><button class="b" aria-label="Dynamic input"><svg width="18" height="16"><path d="M4 1v8M0 5h8" stroke="#fff"/><path fill="#fff" d="M7 10h10v4H7z"/></svg></button><button aria-label="Ortho"><svg width="16" height="16"><path d="M1.500 0v14.500H16M1.500 8.500h5v6" fill="none" stroke="#ddd"/></svg></button><button class="b" aria-label="Polar tracking"><svg width="18" height="16"><circle cx="8" cy="9" r="6.500" fill="none" stroke="#fff"/><path d="M8 9h9M8 9l5-8v14" fill="none" stroke="#fff"/></svg></button><button aria-label="Polar options"><svg width="7" height="5"><use href="#tri"/></svg></button><button class="b" aria-label="Object tracking"><svg width="18" height="16"><path d="M16 1L2 14.500h16" fill="none" stroke="#fff"/><circle cx="9" cy="8" r="1.800" fill="#fff"/></svg></button><button class="b" aria-label="Object snap"><svg width="18" height="18"><path d="M3.500 6v9.500h12v-12H6M.5.5h5v5h-5z" fill="none" stroke="#fff"/></svg></button><button aria-label="Snap list"><svg width="7" height="5"><use href="#tri"/></svg></button></div>
    <button aria-label="Lineweight"><svg width="16" height="14"><path d="M0 1h16M0 5h9M0 9h16M0 13h9" stroke="#ddd" stroke-width="2"/><path d="M9 5h7M9 13h7" stroke="#ddd"/></svg></button>
    <button aria-label="Selection cycling"><svg width="17" height="17"><path d="M3 0v6M0 3h6M7 3.500h7M3.500 7v8" stroke="#ddd"/><path fill="#7bd89a" d="M6 5h11v11H6z"/></svg></button>
    <div class="sg"><button class="b" aria-label="Annotation visibility"><svg width="18" height="16"><use href="#A" width="14" height="16"/><circle cx="15" cy="4" r="2" fill="none" stroke="#fff"/></svg></button><button class="b" aria-label="Auto scale"><svg width="18" height="16"><use href="#A" width="14" height="16"/><path d="M16 0l-3 4h3l-3 4" fill="none" stroke="#fff" stroke-width="1.500"/></svg></button><button class="scale"><svg width="14" height="16"><use href="#A"/></svg>1:50 <svg width="7" height="5"><use href="#tri"/></svg></button></div>
    <button class="gear" aria-label="Workspace"><svg width="16" height="16" viewBox="0 0 16 16"><circle cx="8" cy="8" r="6.500" fill="none" stroke="#ddd" stroke-width="3" stroke-dasharray="3 2.100"/><circle cx="8" cy="8" r="4" fill="none" stroke="#ddd" stroke-width="3"/></svg><svg width="7" height="5"><use href="#tri"/></svg></button>
    <button aria-label="Annotation monitor"><svg width="16" height="16"><path d="M8 0v16M0 8h16" stroke="#ddd" stroke-width="2"/></svg></button>
    <button class="disp">Display System Not Initialized <svg width="7" height="5"><use href="#tri"/></svg></button>
    <button class="cube"><svg width="16" height="16" viewBox="0 0 16 16"><path d="M5 4l5-3 5 3v7l-5 4-1-1M5 4l5 3v8M15 4l-5 3" fill="none" stroke="#ddd"/><path d="M.5 10.500h5v5h-5zM0 1h3L0 5h3" fill="none" stroke="#e6a57a"/></svg>+0</button>
    <button aria-label="Isolate objects"><svg width="17" height="16"><path d="M1.500.5h5v7h-5zM7 10l3.500 5.500h-7z" fill="none" stroke="#ddd"/><circle cx="13" cy="7" r="3" fill="none" stroke="#ddd"/></svg></button>
    <div class="sg"><button aria-label="DWG check"><svg width="17" height="16" viewBox="0 0 17 16"><path fill="#f2903c" d="M1 7h8v7H1z"/><path fill="#3f7fc0" d="M1 2h8l5 5v3H1z"/><path d="M4 0v7M0 3.500h8" stroke="#fff"/><path d="M7 11l3 4 6-8" fill="none" stroke="#5fb760" stroke-width="2.500"/></svg></button><button aria-label="Xref status"><svg width="17" height="16" viewBox="0 0 17 16"><path d="M1 8v7.500h15V9l-4-4H9M12 5v4h4" fill="none" stroke="#f0a878" stroke-width="1.200"/><circle cx="3.500" cy="3.500" r="2.500" fill="none" stroke="#f0a878"/></svg></button></div>
    <div class="sg"><button aria-label="Clean screen"><svg width="17" height="14"><path d="M.5 1.500h16v11H.5z" fill="none" stroke="#ddd"/><path d="M9.500 4.500h4v3M7.500 10h-4V7M13 5l-3 2M4 10l3-2" fill="none" stroke="#ddd"/></svg></button><button aria-label="Customization"><svg width="17" height="15"><path d="M0 1h17M0 7h17M0 13h17" stroke="#eee" stroke-width="2"/></svg></button></div>
  </footer>
</section>
</main>
</body>
</html>
```
FILE: styles.css
```
* { box-sizing: border-box; }
body { margin: 0; background: #fff; font: 13px/16px "DejaVu Sans Condensed", "Noto Sans", sans-serif; color: #444; }
button { font: inherit; color: inherit; background: none; border: 0; padding: 0; margin: 0; display: flex; align-items: center; white-space: nowrap; }
p, h1, ul { margin: 0; padding: 0; font-weight: normal; }
svg { flex: none; display: block; }
.defs { position: absolute; width: 0; height: 0; }
.desktop { position: relative; height: 100vh; min-height: 760px; overflow: hidden; }

/* document manager window */
.vp { position: absolute; top: 76px; bottom: 10px; left: 20px; right: 307px; border: 1px solid #a6a6a6; display: flex; flex-direction: column; background: #fff; overflow: hidden; }
.vp-title { display: flex; align-items: center; height: 35px; padding: 0 9px; border-bottom: 1px solid #dcdcdc; }
.vp-title h1 { flex: 1; text-align: center; font-size: 13px; line-height: 20px; color: #777; padding-right: 14px; }
.vp-tabs { display: flex; gap: 34px; padding: 5px 16px 0 17px; height: 30px; font-size: 16px; line-height: 22px; }
.vp-tabs button { align-items: flex-start; height: 24px; }
.vp-tabs .on { border-bottom: 3px solid #0f6cbd; }
.ribbon { display: flex; height: 103px; border-bottom: 1px solid #dcdcdc; padding-bottom: 1px; font-size: 12px; }
.rg { display: flex; flex-direction: column; border-right: 1px solid #dcdcdc; padding-top: 2px; }
.rg p { text-align: center; margin-top: auto; }
.rg.file { width: 97px; }
.rg.file .rb { padding-left: 3px; }
.rg.record { width: 204px; }
.rg.doc { width: 540px; }
.rb { display: flex; height: 76px; }
.big { flex-direction: column; height: 76px; padding-top: 6px; text-align: center; font-size: 12px; }
.big > span { margin-top: 7px; }
.big .ch { margin-top: 4px; }
.w44 { width: 44px; } .w56 { width: 56px; } .w72 { width: 72px; } .w76 { width: 76px; } .w78 { width: 78px; }
.small { display: flex; flex-direction: column; justify-content: space-between; padding: 2px 0 1px 8px; border-left: 1px solid #dcdcdc; font-size: 13px; }
.small button { gap: 5px; height: 24px; }
.small .ch { margin-left: 4px; }
.small.two { width: 78px; padding: 10px 0 8px 1px; border-left: 0; border-right: 1px solid #dcdcdc; }
.doc .small:last-child { border: 0; padding-left: 2px; }
.two + .w44 { margin-left: 6px; }
.doctabs { display: flex; height: 30px; padding-top: 2px; border-bottom: 2px solid #dedede; line-height: 18px; }
.doctabs button { width: 123px; padding: 2px 14px 0; }
.doctabs .on { width: 95px; padding: 0 10px; border: 1px solid #dcdcdc; border-top: 2px solid #a6a6a6; border-bottom: 0; gap: 10px; background: #fff; margin-bottom: -2px; }
.doctabs .on span { font-size: 14px; color: #888; }
.work { flex: 1; min-height: 0; display: flex; margin: 0 3px 0 2px; padding: 1px 0 2px 1px; border: solid #dedede; border-width: 0 1px 2px 2px; }
.panel { border: 1px solid #a6a6a6; }
.tree { width: 364px; margin-right: 10px; padding-top: 1px; }
.tree ul { list-style: none; }
.tree li { display: flex; align-items: center; height: 20px; padding-left: 26px; }
.tree li.root { padding-left: 5px; }
.tree li i, .tree li button { width: 18px; flex: none; }
.tree li span { padding-left: 4px; margin-left: 3px; line-height: 20px; flex: 1; }
.tree li.sel span { background: #e6e6e6; }
.grid { width: 443px; display: flex; flex-direction: column; color: #444; }
.hint { height: 36px; font-size: 12px; line-height: 38px; padding-left: 5px; color: #808080; border-bottom: 1px solid #a6a6a6; }
table { width: 100%; border-collapse: collapse; table-layout: fixed; }
th { font-weight: normal; text-align: left; height: 26px; color: #808080; border-bottom: 1px solid #a6a6a6; padding: 0 3px; border-right: 1px solid #a6a6a6; }
th.c1 { width: 20px; padding: 0 0 0 7px; } th.c2 { width: 163px; }
th:last-child, td:last-child { border-right: 0; }
td { height: 21px; padding: 0 4px; border-right: 1px solid #dcdcdc; border-bottom: 1px solid #dcdcdc; white-space: nowrap; line-height: 20px; }
td.ic { padding: 0 1px; }
.green td:not(.ic) { background: #90ee90; }
.grey td { background: #e6e6e6; }
.hscroll { margin-top: auto; height: 18px; background: #eee; display: flex; padding: 1px; }
.hscroll button { width: 17px; height: 15px; border: 1px solid #a6a6a6; background: #fff; justify-content: center; }
.hscroll span { width: 76px; height: 15px; border: 1px solid #a6a6a6; border-left: 0; background: #fff; }
.hscroll .r { margin-left: auto; }
.detail { flex: 1; margin: -1px 1px 1px 3px; border: 1px solid #dedede; border-left-width: 2px; border-top: 0; }
.bottom { display: flex; align-items: center; gap: 14px; height: 49px; padding: 3px 8px 0; font-size: 15px; line-height: 20px; }
.bottom a { color: inherit; text-decoration: none; white-space: nowrap; }
.bottom button { margin-left: 14px; }
.vp-status { display: flex; align-items: center; height: 22px; background: #0f6cbd; color: #fff; padding: 1px 4px 0 0; }
.vp-status span { padding: 0 8px; border-right: 1px solid #4f93d0; line-height: 18px; }
.vp-status svg { margin-left: auto; }
.mark { position: absolute; left: 571px; top: 751px; font: 800 54px/60px "Open Sans", sans-serif; color: rgba(120, 120, 120, .24); white-space: nowrap; }
.mark small { font-size: 30px; }

/* drawing editor window */
.cad { position: absolute; left: 42%; right: 4px; top: 9px; background: #222831; color: #e6e6e6; font: 12px/16px "Open Sans", "Noto Sans", sans-serif; padding-bottom: 3px; border-bottom: 3px solid #3b4252; display: flex; flex-direction: column; }
.cad-head { display: flex; padding: 5px 5px 0; }
.app { width: 39px; height: 39px; background: linear-gradient(#e2e2e2, #8d8d8d); }
.cad-bars { flex: 1; min-width: 0; }
.cad-title { display: flex; align-items: center; height: 20px; margin-bottom: 5px; }
.qat { display: flex; gap: 8px; padding-left: 10px; width: 246px; flex: none; }
.fname { width: 107px; }
.arr { margin-right: 6px; }
.cad-title input { width: 178px; height: 20px; border: 0; background: #474f63; color: #ddd; padding: 0 3px; font: italic 11px "Open Sans", sans-serif; }
input::placeholder { color: #b8bcc4; opacity: 1; }
.user { display: flex; align-items: center; gap: 14px; padding-left: 6px; flex: none; }
.user .sign { gap: 6px; margin: 0 34px 0 -4px; }
.share, .help { gap: 8px; margin-left: -6px; }
.user button[aria-label="Store"] { margin-left: -2px; }
.help { border-left: 1px solid #4a5160; padding-left: 10px; height: 18px; }
.help b { width: 14px; height: 14px; line-height: 14px; border-radius: 50%; background: #f0f0f0; color: #1c4f8f; text-align: center; }
.wbtn { margin-left: auto; display: flex; gap: 13px; padding-right: 5px; }
.cad-tabs { display: flex; height: 19px; padding-left: 6px; color: #b4b8bf; }
.cad-tabs button { padding: 0 9px; }
.cad-tabs .on { background: #3b4252; color: #fff; padding: 0 8px; }
.cad-tabs .mini { gap: 8px; padding-left: 18px; }
.cad-ribbon { display: flex; gap: 1px; padding-left: 6px; }
.panelc { background: #3b4252; width: 290px; height: 98px; padding: 4px 0 0 6px; display: flex; flex-direction: column; color: #f0f0f0; }
.panelc .row { display: flex; height: 24px; gap: 7px; }
.panelc .row button { gap: 5px; }
.panelc p { text-align: center; line-height: 22px; padding-right: 4px; }
.panelc.touch { width: 42px; padding: 6px 0 0; }
.touch p { padding: 0; }
.touch button { flex-direction: column; line-height: 15px; height: 70px; }
.touch button span { margin-top: 2px; }
.cad-docs { display: flex; height: 27px; align-items: flex-end; padding-left: 24px; color: #aeb3bb; border-left: 4px solid #3b4252; }
.cad-docs button { height: 22px; border-radius: 8px 10px 0 0; background: #303746; }
.cad-docs .t1 { width: 120px; padding-left: 8px; }
.cad-docs .t2 { width: 154px; margin-left: 2px; padding-left: 8px; gap: 7px; background: #3b4252; color: #fff; }
.cad-docs .t2 span { color: #aaa; }
.cad-docs .plus { width: 22px; height: 15px; margin: 0 0 4px 6px; justify-content: center; background: #3b4252; border-radius: 4px 8px 8px 4px; font-weight: bold; }
.canvas { position: relative; border: 4px solid #3b4252; border-right-width: 3px; border-bottom-width: 1px; margin-right: 2px; }
.plan { width: 100%; height: auto; }
.axes { font: 20px "Liberation Sans", sans-serif; }
.vlabel { position: absolute; left: 3px; top: 6px; }
.vbtn { position: absolute; right: 11px; top: 10px; display: flex; gap: 10px; }
.nav3d { position: absolute; right: 10px; top: 34px; display: flex; flex-direction: column; align-items: center; }
.dirs { font: bold 12px "Liberation Sans", sans-serif; }
.dirs .top { font-size: 8px; fill: #555; }
.nav3d button { margin-top: 10px; width: 48px; height: 17px; border-radius: 4px; background: #8d90a3; color: #555a6b; font: 11px "Liberation Sans", sans-serif; padding: 0 5px; justify-content: space-between; border: 1px solid #a5a8b8; }
.cmd { position: absolute; left: 20%; right: 20%; bottom: 1px; height: 25px; margin: 0 1px 0 1px; background: #2d3442; display: flex; align-items: center; gap: 5px; padding-left: 3px; }
.wrench { margin: 0 1px 0 5px; }
.cmdbox { position: relative; flex: 1; height: 25px; background: #bcbec0; display: flex; align-items: center; padding: 0 4px; border-radius: 2px; }
.cmdbox input { flex: 1; border: 0; background: none; height: 24px; padding: 0 6px; font: italic 12px "DejaVu Sans Mono", monospace; color: #444; }
.cmdbox input::placeholder { color: #666; }
.floor { position: absolute; left: 113px; top: 3px; color: #fff; font: 11px/16px "Liberation Sans", sans-serif; }
.layouts { display: flex; justify-content: space-between; padding: 1px 5px 0 16px; height: 29px; }
.lt { display: flex; gap: 2px; }
.lt button { height: 17px; padding: 0 10px; background: #2b323e; border-radius: 2px 2px 8px 8px; color: #aeb3bb; }
.lt .on { background: #3b4252; color: #fff; font-weight: bold; }
.lt .pl { padding: 0 6px; margin-left: 2px; font-weight: bold; }
.layouts output { background: #3b4252; height: 24px; line-height: 24px; padding: 0 5px 0 22px; }
.cad-status { display: flex; justify-content: flex-end; gap: 3px; padding: 0 5px 0 0; color: #fff; }
.cad-status > * { background: #3b4252; height: 24px; }
.cad-status button { padding: 0 3px; height: 24px; }
.sg { display: flex; }
.cad-status .sg button { padding: 0 4px; }
.cad-status .sg .b { background: #5b8ac0; border: 1px solid #3b4252; padding: 0 2px; }
.cad-status .scale, .cad-status .cube { gap: 5px; }
.cad-status .disp { gap: 4px; }
.cad-status .gear { gap: 10px; }
```
